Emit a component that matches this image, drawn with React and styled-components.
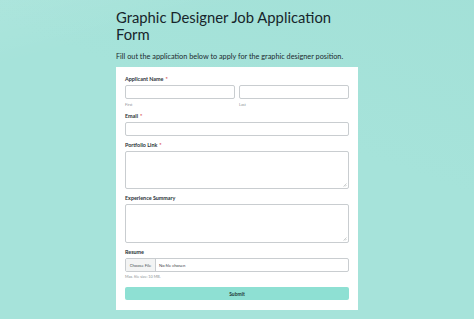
import React from 'react';
import styled, { createGlobalStyle } from 'styled-components';

const GlobalStyle = createGlobalStyle`
  html, body {
    margin: 0;
    padding: 0;
  }
  body {
    font-family: Lato, "Open Sans", sans-serif;
    background: #a6e3da;
    color: #1c2a30;
  }
`;

const Page = styled.div`
  min-height: 319px;
  background:
    linear-gradient(165deg, rgba(255,255,255,0.08) 0%, rgba(255,255,255,0) 15%),
    linear-gradient(200deg, rgba(150,215,205,0.2) 0%, rgba(255,255,255,0) 40%),
    #a6e3da;
  display: flex;
  justify-content: center;
  padding-top: 9px;
  box-sizing: border-box;
  overflow: hidden;
`;

const Wrapper = styled.div`
  width: 242px;
`;

const Title = styled.h1`
  font-family: Lato, sans-serif;
  font-weight: 400;
  font-size: 14.8px;
  line-height: 17px;
  margin: 0;
  color: #17252b;
`;

const Subtitle = styled.p`
  font-family: Lato, sans-serif;
  font-size: 7.3px;
  line-height: 9px;
  margin: 9px 0 6px;
  color: #1c2a30;
  white-space: nowrap;
`;

const Card = styled.form`
  background: #fff;
  padding: 9px 9px 10px;
  display: flex;
  flex-direction: column;
`;

const Field = styled.div`
  display: flex;
  flex-direction: column;
  margin-bottom: ${p => p.$mb}px;
`;

const Label = styled.label`
  font-size: 5.4px;
  font-weight: 700;
  color: #2b3338;
  margin-bottom: 2px;
  line-height: 7px;
`;

const Star = styled.span`
  color: #d9534f;
  margin-left: 2px;
`;

const Row = styled.div`
  display: flex;
  gap: 4px;
`;

const Col = styled.div`
  flex: 1;
  display: flex;
  flex-direction: column;
`;

const Input = styled.div`
  height: ${p => p.$h || 14}px;
  border: 1px solid #c9cdd0;
  border-radius: 2px;
  box-sizing: border-box;
  background: #fff;
  position: relative;
`;

const Grip = styled.svg`
  position: absolute;
  right: 1px;
  bottom: 1px;
`;

const Sub = styled.span`
  font-size: 3.8px;
  color: #8a9195;
  margin-top: ${p => p.$mt || 3}px;
  line-height: 5px;
`;

const FileBox = styled.div`
  height: 14px;
  border: 1px solid #c9cdd0;
  border-radius: 2px;
  box-sizing: border-box;
  display: flex;
  align-items: stretch;
`;

const FileButton = styled.span`
  width: 29px;
  background: #f3f4f4;
  border-right: 1px solid #c9cdd0;
  font-size: 4.2px;
  color: #4b5256;
  display: flex;
  align-items: center;
  justify-content: center;
`;

const FileText = styled.span`
  font-size: 4.2px;
  color: #3a4145;
  display: flex;
  align-items: center;
  padding-left: 3px;
`;

const Submit = styled.div`
  height: 13px;
  background: #8ee0d3;
  border-radius: 2px;
  font-size: 5px;
  font-weight: 700;
  color: #1f3a36;
  display: flex;
  align-items: center;
  justify-content: center;
`;

const Textarea = ({ h }) => (
  <Input $h={h}>
    <Grip width="4" height="4" viewBox="0 0 4 4">
      <path d="M0.5 3.5 L3.5 0.5 M2 3.5 L3.5 2" stroke="#9aa0a3" strokeWidth="0.5" />
    </Grip>
  </Input>
);

export default function App() {
  return (
    <>
      <GlobalStyle />
      <Page>
        <Wrapper>
          <Title>Graphic Designer Job Application Form</Title>
          <Subtitle>Fill out the application below to apply for the graphic designer position.</Subtitle>
          <Card>
            <Field $mb={6}>
              <Label>Applicant Name<Star>*</Star></Label>
              <Row>
                <Col>
                  <Input />
                  <Sub>First</Sub>
                </Col>
                <Col>
                  <Input />
                  <Sub>Last</Sub>
                </Col>
              </Row>
            </Field>
            <Field $mb={6}>
              <Label>Email<Star>*</Star></Label>
              <Input />
            </Field>
            <Field $mb={6}>
              <Label>Portfolio Link<Star>*</Star></Label>
              <Textarea h={38} />
            </Field>
            <Field $mb={6}>
              <Label>Experience Summary</Label>
              <Textarea h={39} />
            </Field>
            <Field $mb={8}>
              <Label>Resume</Label>
              <FileBox>
                <FileButton>Choose File</FileButton>
                <FileText>No file chosen</FileText>
              </FileBox>
              <Sub $mt={2}>Max. file size: 10 MB.</Sub>
            </Field>
            <Submit>Submit</Submit>
          </Card>
        </Wrapper>
      </Page>
    </>
  );
}
